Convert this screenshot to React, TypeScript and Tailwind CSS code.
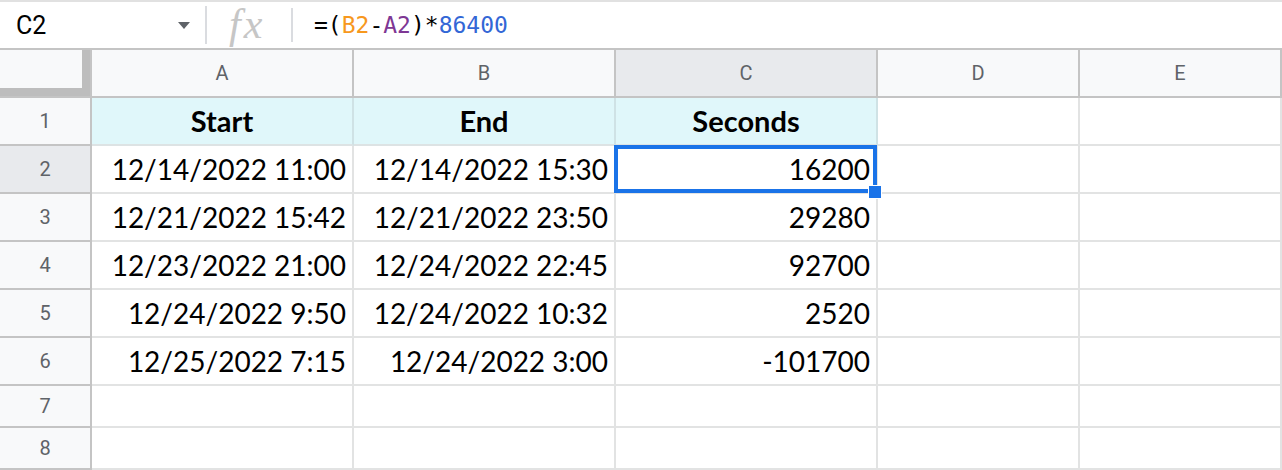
import React from 'react';

type Row = { n: number; h: string; a: string; b: string; c: string; head?: boolean };

const rows: Row[] = [
  { n: 1, h: 'h-[48px]', a: 'Start', b: 'End', c: 'Seconds', head: true },
  { n: 2, h: 'h-[48px]', a: '12/14/2022 11:00', b: '12/14/2022 15:30', c: '16200' },
  { n: 3, h: 'h-[48px]', a: '12/21/2022 15:42', b: '12/21/2022 23:50', c: '29280' },
  { n: 4, h: 'h-[48px]', a: '12/23/2022 21:00', b: '12/24/2022 22:45', c: '92700' },
  { n: 5, h: 'h-[48px]', a: '12/24/2022 9:50', b: '12/24/2022 10:32', c: '2520' },
  { n: 6, h: 'h-[48px]', a: '12/25/2022 7:15', b: '12/24/2022 3:00', c: '-101700' },
  { n: 7, h: 'h-[42px]', a: '', b: '', c: '' },
  { n: 8, h: 'h-[42px]', a: '', b: '', c: '' },
];

function DataCell({ text, head, wide, children }: { text: string; head?: boolean; wide: boolean; children?: React.ReactNode }) {
  const base = wide ? 'w-[262px]' : 'w-[202px]';
  if (head) {
    return (
      <div className={`${base} relative shrink-0 border-r-2 border-b-2 border-r-[#cfe2e5] border-b-[#dde3e4] bg-[#e0f7fa] flex items-center justify-center font-bold text-[29px] text-black`}>
        {text}
        {children}
      </div>
    );
  }
  return (
    <div className={`${base} relative shrink-0 border-r-2 border-b-2 border-[#e2e3e3] flex items-center justify-end pr-[6px] text-black`}>
      {text}
      {children}
    </div>
  );
}

export default function App() {
  return (
    <div className="w-[1282px] h-[470px] overflow-hidden bg-white">
      {/* Formula bar */}
      <div className="h-[50px] border-t-2 border-b-2 border-t-[#e1e1e1] border-b-[#c4c4c4] flex items-center bg-white">
        <div className="w-[205px] h-full flex items-center justify-between pl-[16px] pr-[15px]">
          <span className="font-['Roboto',sans-serif] text-[25px] text-black leading-none">C2</span>
          <svg width="12" height="7" viewBox="0 0 12 7">
            <path d="M0 0 L12 0 L6 7 Z" fill="#5f6368" />
          </svg>
        </div>
        <div className="w-[2px] h-[38px] bg-[#dadce0] shrink-0" />
        <div className="w-[84px] h-full flex items-center pl-[22px] shrink-0">
          <span className="font-['Liberation_Serif',serif] italic text-[42px] leading-none text-[#c6c6c6] tracking-[3px] -mt-[3px]">fx</span>
        </div>
        <div className="w-[2px] h-[34px] bg-[#dadce0] shrink-0" />
        <div className="pl-[21px] font-['DejaVu_Sans_Mono',monospace] text-[23px] leading-none text-black whitespace-pre">
          <span>=(</span>
          <span className="text-[#f7981d]">B2</span>
          <span>-</span>
          <span className="text-[#7e3794]">A2</span>
          <span>)*</span>
          <span className="text-[#3367d6]">86400</span>
        </div>
      </div>

      {/* Column headers */}
      <div className="flex h-[48px] font-['Roboto',sans-serif] text-[20px] text-[#5f6368]">
        <div className="w-[92px] shrink-0 border-r-2 border-b-2 border-[#c4c4c4] bg-[#bdbdbd] flex flex-col">
          <div className="w-[82px] h-[38px] bg-[#f8f9fa]" />
        </div>
        {[
          { l: 'A', w: 'w-[262px]', bg: 'bg-[#f8f9fa]' },
          { l: 'B', w: 'w-[262px]', bg: 'bg-[#f8f9fa]' },
          { l: 'C', w: 'w-[262px]', bg: 'bg-[#e8eaed]' },
          { l: 'D', w: 'w-[202px]', bg: 'bg-[#f8f9fa]' },
          { l: 'E', w: 'w-[202px]', bg: 'bg-[#f8f9fa]' },
        ].map((c) => (
          <div key={c.l} className={`${c.w} ${c.bg} shrink-0 border-r-2 border-b-2 border-[#c4c4c4] flex items-center justify-center`}>
            {c.l}
          </div>
        ))}
      </div>

      {/* Rows */}
      {rows.map((r) => (
        <div key={r.n} className={`flex ${r.h}`}>
          <div
            className={`w-[92px] shrink-0 border-r-2 border-b-2 border-[#c4c4c4] flex items-center justify-center font-['Roboto',sans-serif] text-[20px] text-[#5f6368] ${
              r.n === 2 ? 'bg-[#e8eaed]' : 'bg-[#f8f9fa]'
            }`}
          >
            {r.n}
          </div>
          <div className="flex font-['Lato',sans-serif] text-[28px]">
            <DataCell text={r.a} head={r.head} wide />
            <DataCell text={r.b} head={r.head} wide />
            <DataCell text={r.c} head={r.head} wide>
              {r.n === 2 && (
                <>
                  <div className="absolute -left-[2px] -top-[1px] w-[263px] h-[48px] border-4 border-[#1a73e8] z-10" />
                  <div className="absolute left-[252px] top-[39px] w-[14px] h-[14px] bg-[#1a73e8] border border-white z-20" />
                </>
              )}
            </DataCell>
            <DataCell text="" wide={false} />
            <DataCell text="" wide={false} />
          </div>
        </div>
      ))}
    </div>
  );
}
